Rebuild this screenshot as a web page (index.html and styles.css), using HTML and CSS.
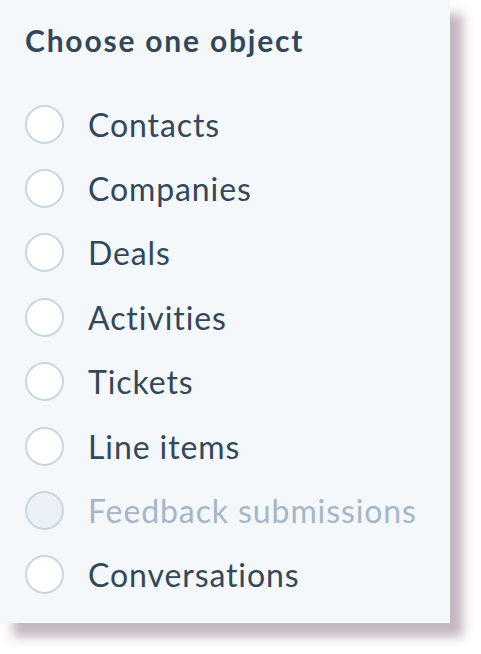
FILE: index.html
```html
<!DOCTYPE html>
<html lang="en">
<head>
    <meta charset="UTF-8">
    <title>Choose one object</title>
    <link rel="stylesheet" href="styles.css">
</head>
<body>
    <div class="panel">
        <h2 class="title">Choose one object</h2>
        <ul class="options">
            <li class="option"><span class="radio"></span>Contacts</li>
            <li class="option"><span class="radio"></span>Companies</li>
            <li class="option"><span class="radio"></span>Deals</li>
            <li class="option"><span class="radio"></span>Activities</li>
            <li class="option"><span class="radio"></span>Tickets</li>
            <li class="option"><span class="radio"></span>Line items</li>
            <li class="option disabled"><span class="radio"></span>Feedback submissions</li>
            <li class="option"><span class="radio"></span>Conversations</li>
        </ul>
    </div>
</body>
</html>
```

FILE: styles.css
```css
* {
    margin: 0;
    padding: 0;
    box-sizing: border-box;
}
body {
    min-height: 100vh;
    padding-bottom: 31px;
    background: white;
    font-family: Lato, "Noto Sans", sans-serif;
    font-variant-ligatures: none;
}
.panel {
    width: 450px;
    padding: 20px 0 16px 25px;
    background: #f5f8fa;
    box-shadow: 13px 14px 10px rgba(105, 75, 100, 0.4);
}
.title {
    font-size: 30px;
    line-height: 40px;
    font-weight: 700;
    letter-spacing: 1.8px;
    color: #33475b;
}
.options {
    list-style: none;
    margin-top: 32px;
}
.option {
    display: flex;
    align-items: center;
    height: 64.4px;
    font-size: 32px;
    letter-spacing: 0.9px;
    color: #33475b;
}
.radio {
    width: 39px;
    height: 39px;
    margin-right: 24px;
    border: 2px solid #cbd6e2;
    border-radius: 50%;
    background: white;
    flex-shrink: 0;
}
.disabled {
    color: #a4b6c9;
}
.disabled .radio {
    background: #eaf0f6;
}
```
